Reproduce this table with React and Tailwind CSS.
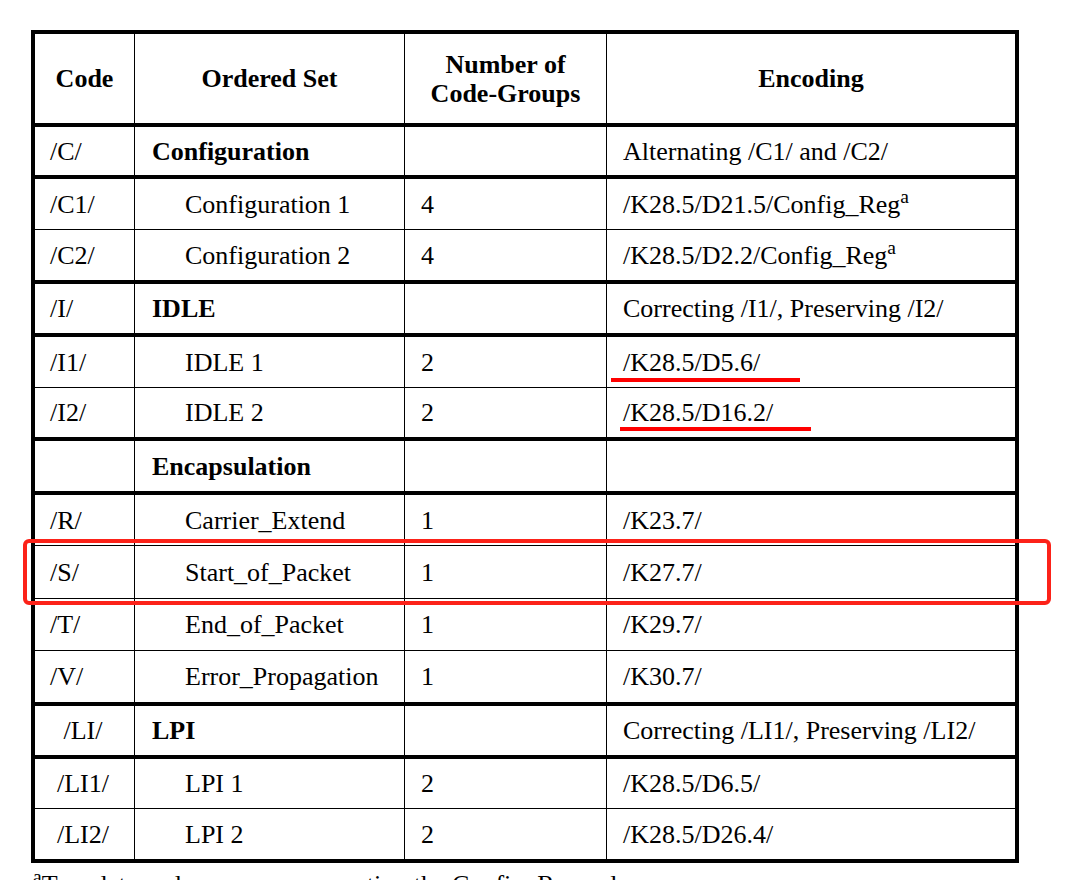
const rows = [
  { code: "/C/", set: "Configuration", head: true, num: "", enc: "Alternating /C1/ and /C2/", cls: "h-[52px] border-b-4" },
  { code: "/C1/", set: "Configuration 1", num: "4", enc: "/K28.5/D21.5/Config_Reg", sup: true, cls: "h-[51px] border-b" },
  { code: "/C2/", set: "Configuration 2", num: "4", enc: "/K28.5/D2.2/Config_Reg", sup: true, cls: "h-[54px] border-b-4" },
  { code: "/I/", set: "IDLE", head: true, num: "", enc: "Correcting /I1/, Preserving /I2/", cls: "h-[53px] border-b-4" },
  { code: "/I1/", set: "IDLE 1", num: "2", enc: "/K28.5/D5.6/", cls: "h-[51px] border-b" },
  { code: "/I2/", set: "IDLE 2", num: "2", enc: "/K28.5/D16.2/", cls: "h-[53px] border-b-4" },
  { code: "", set: "Encapsulation", head: true, num: "", enc: "", cls: "h-[54px] border-b-4" },
  { code: "/R/", set: "Carrier_Extend", num: "1", enc: "/K23.7/", cls: "h-[51px] border-b" },
  { code: "/S/", set: "Start_of_Packet", num: "1", enc: "/K27.7/", cls: "h-[53px] border-b" },
  { code: "/T/", set: "End_of_Packet", num: "1", enc: "/K29.7/", cls: "h-[52px] border-b" },
  { code: "/V/", set: "Error_Propagation", num: "1", enc: "/K30.7/", cls: "h-[55px] border-b-4" },
  { code: "/LI/", set: "LPI", head: true, num: "", enc: "Correcting /LI1/, Preserving /LI2/", center: true, cls: "h-[53px] border-b-4" },
  { code: "/LI1/", set: "LPI 1", num: "2", enc: "/K28.5/D6.5/", center: true, cls: "h-[50px] border-b" },
  { code: "/LI2/", set: "LPI 2", num: "2", enc: "/K28.5/D26.4/", center: true, cls: "h-[54px] border-b-4" },
];

function Row({ r }) {
  return (
    <div className={`grid grid-cols-[100px_270px_202px_408px] border-black ${r.cls}`}>
      <div
        className={
          r.center
            ? "flex items-center justify-center border-r border-black pr-[3px]"
            : "flex items-center border-r border-black pl-[15px]"
        }
      >
        {r.code}
      </div>
      <div
        className={
          r.head
            ? "flex items-center border-r border-black pl-[17px] font-bold"
            : "flex items-center border-r border-black pl-[50px]"
        }
      >
        {r.set}
      </div>
      <div className="flex items-center border-r border-black pl-4">{r.num}</div>
      <div className="flex items-center pl-4">
        <span>
          {r.enc}
          {r.sup && <sup>a</sup>}
        </span>
      </div>
    </div>
  );
}

export default function App() {
  return (
    <div className="relative h-[880px] overflow-hidden bg-white pl-[31px] pt-[30px] font-['Liberation_Serif',serif] text-[26px] text-black">
      <div className="w-[988px] border-x-4 border-t-4 border-black">
        <div className="grid h-[93px] grid-cols-[100px_270px_202px_408px] border-b-4 border-black text-center font-bold leading-[29px]">
          <div className="flex items-center justify-center border-r border-black">Code</div>
          <div className="flex items-center justify-center border-r border-black">Ordered Set</div>
          <div className="flex items-center justify-center border-r border-black">
            Number of
            <br />
            Code-Groups
          </div>
          <div className="flex items-center justify-center">Encoding</div>
        </div>
        {rows.map((r, i) => (
          <Row key={i} r={r} />
        ))}
      </div>

      <p className="ml-[2px] mt-[9px] text-[26px] leading-none">
        <sup>a</sup>Two data code-groups representing the Config_Reg value.
      </p>

      {/* annotations */}
      <div className="absolute left-[611px] top-[378px] h-[4px] w-[189px] bg-[#ff0000]" />
      <div className="absolute left-[620px] top-[427px] h-[4px] w-[191px] bg-[#ff0000]" />
      <div className="absolute left-[23px] top-[539px] h-[66px] w-[1028px] rounded-[6px] border-4 border-[#fc2219]" />
    </div>
  );
}
